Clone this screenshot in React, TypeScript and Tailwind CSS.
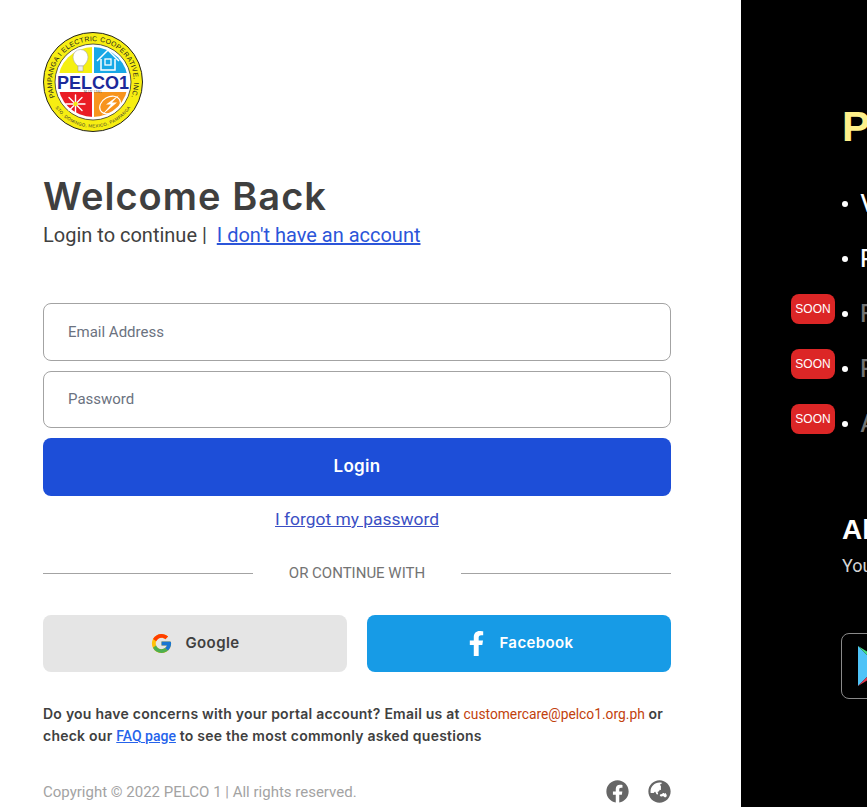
import React from "react";
import { FaFacebook, FaFacebookF, FaGlobeAsia } from "react-icons/fa";

const poppins = "font-['Inter','Open_Sans',sans-serif]";

function Logo() {
  return (
    <svg width="100" height="100" viewBox="0 0 100 100" className="block">
      <defs>
        <path id="topArc" d="M 12.800 67.300 A 41 41 0 1 1 87.200 67.300" />
        <path id="botArc" d="M 12.700 76 A 45.500 45.500 0 0 0 87.300 76" />
        <clipPath id="inner"><circle cx="50" cy="50" r="35" /></clipPath>
      </defs>
      <circle cx="50" cy="50" r="49.500" fill="#f7ee12" stroke="#222" strokeWidth="1" />
      <circle cx="50" cy="50" r="38" fill="#fff" stroke="#333" strokeWidth="0.800" />
      <text fontSize="6.900" fill="#1a1a1a" fontFamily="Liberation Sans, sans-serif" letterSpacing="0.350">
        <textPath href="#topArc" startOffset="50%" textAnchor="middle">PAMPANGA I ELECTRIC COOPERATIVE, INC.</textPath>
      </text>
      <text fontSize="4.400" fill="#333" fontFamily="Liberation Sans, sans-serif" letterSpacing="0.300">
        <textPath href="#botArc" startOffset="50%" textAnchor="middle">STO. DOMINGO, MEXICO, PAMPANGA</textPath>
      </text>
      <g clipPath="url(#inner)">
        <rect x="14" y="14" width="35" height="27" fill="#f5f011" />
        <rect x="51" y="14" width="35" height="27" fill="#18a8e6" />
        <rect x="14" y="60" width="35" height="27" fill="#ea1c24" />
        <rect x="51" y="60" width="35" height="27" fill="#f7941d" />
      </g>
      <path d="M35 34c-3-2-5-6-5-9a7.500 7.500 0 0 1 15 0c0 3-2 7-5 9z" fill="#fff" stroke="#aaa" strokeWidth="0.600" />
      <rect x="35" y="34" width="5" height="5" fill="#eee" stroke="#999" strokeWidth="0.500" />
      <path d="M54 29 65 18l11 11M58 27v11h14V27" fill="none" stroke="#fff" strokeWidth="1.500" />
      <rect x="62" y="27" width="6" height="6" fill="none" stroke="#fff" strokeWidth="1.300" />
      <text x="50" y="56.500" textAnchor="middle" fontSize="18" fontWeight="700" fill="#1b2a9a" fontFamily="Liberation Sans, sans-serif">PELCO1</text>
      <text x="50" y="60.500" textAnchor="middle" fontSize="3.400" fill="#444" fontFamily="Liberation Serif, serif" letterSpacing="0.400">MAY 1981</text>
      <g stroke="#fff" strokeWidth="1.400" strokeLinecap="round">
        <path d="M23 72h19M32.500 63v19M26 65.500l13 13M39 65.500l-13 13" />
      </g>
      <circle cx="32.500" cy="72" r="2.200" fill="#f5e911" />
      <ellipse cx="67" cy="73" rx="11" ry="8" fill="none" stroke="#fff" strokeWidth="1.100" transform="rotate(-30 67 73)" />
      <path d="M76 63 63 72.500h5L59 83l15-12.500h-5z" fill="#fff" />
    </svg>
  );
}

function GoogleIcon() {
  return (
    <svg width="23" height="23" viewBox="0 0 48 48">
      <path fill="#FFC107" d="M43.600 20.100H42V20H24v8h11.300C33.700 32.700 29.200 36 24 36c-6.600 0-12-5.400-12-12s5.400-12 12-12c3.100 0 5.800 1.200 8 3l5.700-5.700C34 6 29.300 4 24 4 13 4 4 13 4 24s9 20 20 20 20-9 20-20c0-1.300-.1-2.700-.4-3.900z" />
      <path fill="#FF3D00" d="m6.300 14.700 6.600 4.800C14.700 15.100 19 12 24 12c3.100 0 5.800 1.200 8 3l5.700-5.700C34 6 29.300 4 24 4 16.300 4 9.700 8.300 6.300 14.700z" />
      <path fill="#4CAF50" d="M24 44c5.200 0 9.900-2 13.400-5.200l-6.200-5.200C29.200 35.100 26.700 36 24 36c-5.200 0-9.600-3.300-11.300-7.900l-6.500 5C9.500 39.600 16.200 44 24 44z" />
      <path fill="#1976D2" d="M43.600 20.100H42V20H24v8h11.300c-.8 2.200-2.200 4.200-4.100 5.600l6.200 5.200C37 39.200 44 34 44 24c0-1.300-.1-2.700-.4-3.900z" />
    </svg>
  );
}

function Field({ label, tall }: { label: string; tall?: boolean }) {
  return (
    <div className={`${tall ? "h-[58px]" : "h-[57px]"} rounded-lg border border-[#a3a3a3] bg-white px-6 flex items-center text-[15px] text-[#6b7280]`}>
      {label}
    </div>
  );
}

function Feature({ text, color, soon }: { text: string; color: string; soon?: boolean }) {
  return (
    <li className="relative h-[55px] flex items-start pl-[18px]">
      {soon && (
        <span className="absolute left-[-51px] top-[-8px] h-[30px] w-[44px] rounded-lg bg-[#dc2626] text-white text-[12px] flex items-center justify-center font-['Liberation_Sans',sans-serif]">
          SOON
        </span>
      )}
      <span className="absolute left-0 top-[9px] h-[6px] w-[6px] rounded-full bg-white" />
      <span className={`text-[24px] leading-[24px] font-medium whitespace-nowrap font-['Inter',sans-serif] ${color}`}>{text}</span>
    </li>
  );
}

export default function App() {
  return (
    <div className="flex h-[807px] w-[867px] overflow-hidden bg-white font-['Roboto',sans-serif]">
      <main className="w-[741px] shrink-0 pl-[43px] pr-[70px] pt-[32px]">
        <Logo />
        <h1 className={`mt-[41px] text-[38px] leading-[47px] font-semibold tracking-[1.05px] text-[#3f3f3f] ${poppins}`}>
          Welcome Back
        </h1>
        <p className="text-[20px] leading-[30px] text-[#404040] whitespace-nowrap">
          Login to continue |&nbsp; <a className="text-[#2b55d9] underline">I don't have an account</a>
        </p>

        <div className="mt-[53px] flex flex-col gap-[10px]">
          <Field label="Email Address" tall />
          <Field label="Password" />
          <button className={`h-[58px] rounded-lg bg-[#1d4ed8] text-white text-[17px] font-semibold tracking-[0.3px] ${poppins}`}>Login</button>
        </div>

        <div className="mt-[9px] text-center text-[17.4px] leading-[28px]">
          <a className="text-[#3b4fc4] underline">I forgot my password</a>
        </div>

        <div className="mt-[30px] flex items-center gap-[36px] text-[15px] leading-[20px] text-[#737373]">
          <div className="h-px flex-1 bg-[#a3a3a3]" />
          <span>OR CONTINUE WITH</span>
          <div className="h-px flex-1 bg-[#a3a3a3]" />
        </div>

        <div className={`mt-[32px] grid grid-cols-2 gap-5 text-[15px] font-semibold tracking-[0.4px] ${poppins}`}>
          <button className="h-[57px] rounded-lg bg-[#e5e5e5] text-[#404040] flex items-center justify-center gap-3">
            <GoogleIcon />
            Google
          </button>
          <button className="h-[57px] rounded-lg bg-[#179be6] text-white flex items-center justify-center gap-[14px] pl-1">
            <FaFacebookF className="w-[17px] h-[25px]" />
            Facebook
          </button>
        </div>

        <p className={`mt-[31px] text-[14px] leading-[21px] font-semibold tracking-[0.24px] text-[#404040] ${poppins}`}>
          Do you have concerns with your portal account? Email us at{" "}
          <a className="text-[#c2410c] text-[13.8px] font-normal tracking-normal font-['Roboto',sans-serif]">customercare@pelco1.org.ph</a> or check our{" "}
          <a className="text-[#2563eb] text-[14px] font-medium tracking-normal underline font-['Roboto',sans-serif]">FAQ page</a> to see the most commonly asked questions
        </p>

        <div className="mt-[33px] flex items-center justify-between">
          <span className="text-[15px] leading-[22px] text-[#a3a3a3]">Copyright © 2022 PELCO 1 | All rights reserved.</span>
          <div className="flex items-center gap-[19px]">
            <FaFacebook className="w-[23px] h-[23px] text-[#666666]" />
            <FaGlobeAsia className="w-[23px] h-[23px] text-[#666666]" />
          </div>
        </div>
      </main>

      <aside className="flex-1 min-w-0 bg-black overflow-hidden pl-[101px] pt-[101px] text-white">
        <h2 className="text-[42px] leading-[52px] font-bold text-[#fef08a] whitespace-nowrap font-['Liberation_Sans',sans-serif]">PELCO 1 Portal</h2>
        <ul className="mt-[39px] font-['Liberation_Sans',sans-serif]">
          <Feature text="View Bills" color="text-white" />
          <Feature text="Pay Bills" color="text-white" />
          <Feature text="File Complaints" color="text-[#737373]" soon />
          <Feature text="Request Services" color="text-[#737373]" soon />
          <Feature text="Apply Online" color="text-[#737373]" soon />
        </ul>
        <h3 className="mt-[47px] text-[28px] leading-[32px] font-bold whitespace-nowrap font-['Liberation_Sans',sans-serif]">Also on mobile</h3>
        <p className="mt-[7px] text-[18px] leading-[26px] text-[#d4d4d4] whitespace-nowrap">You can download the app</p>
        <div className="mt-[54px] ml-[-1px] h-[66px] w-[200px] rounded-lg border border-[#8a8a8a] flex items-center pl-[15px]">
          <svg width="24" height="44" viewBox="0 0 24 44" className="shrink-0">
            <path d="M1 2v40l20-20z" fill="#4fc3f7" />
            <path d="M1 2l20 20 3-6z" fill="#4ade80" />
            <path d="M1 42l20-20 3 6z" fill="#e53950" />
          </svg>
        </div>
      </aside>
    </div>
  );
}
